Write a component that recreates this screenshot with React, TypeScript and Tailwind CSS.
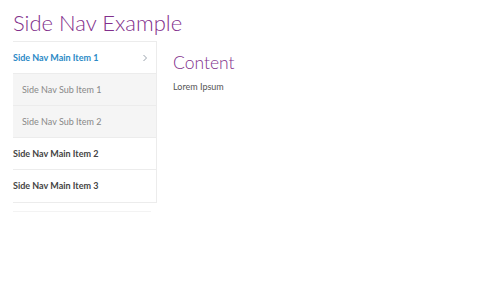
import React from "react";

const subItems = ["Side Nav Sub Item 1", "Side Nav Sub Item 2"];
const mainItems = ["Side Nav Main Item 2", "Side Nav Main Item 3"];

export default function App() {
  return (
    <div className="w-[480px] h-[300px] bg-white pl-[13px] pt-[8px]" style={{ fontFamily: "Lato, 'Open Sans', sans-serif" }}>
      <h1 className="text-[22px] leading-[30px] text-[#822f8c] font-light">Side Nav Example</h1>

      <div className="flex mt-[3px]">
        {/* Side nav */}
        <div className="w-[144px]">
          <nav className="border-t border-r border-b border-[#ececec]">
            <div className="h-[32px] flex items-center justify-between pr-[8px] border-b border-[#ececec]">
              <span className="text-[9px] font-bold text-[#2b8ac6]">Side Nav Main Item 1</span>
              <svg width="6" height="8" viewBox="0 0 6 8" fill="none">
                <path d="M1.5 1 L4.5 4 L1.5 7" stroke="#9aa3ad" strokeWidth="1" />
              </svg>
            </div>
            {subItems.map((s) => (
              <div key={s} className="h-[32px] flex items-center pl-[9px] bg-[#f5f5f5] border-b border-[#ececec]">
                <span className="text-[9px] text-[#888]">{s}</span>
              </div>
            ))}
            {mainItems.map((m, i) => (
              <div key={m} className={`h-[32px] flex items-center ${i === 0 ? "border-b border-[#ececec]" : ""}`}>
                <span className="text-[9px] font-bold text-[#444]">{m}</span>
              </div>
            ))}
          </nav>
          <div className="mt-[8px] mr-[6px] h-px bg-[#f3f3f3]" />
        </div>

        {/* Content */}
        <div className="ml-[16px] pt-[10px]">
          <h2 className="text-[17.5px] leading-[24px] text-[#822f8c] font-light">Content</h2>
          <p className="mt-[5px] text-[9px] text-[#555]">Lorem Ipsum</p>
        </div>
      </div>
    </div>
  );
}
